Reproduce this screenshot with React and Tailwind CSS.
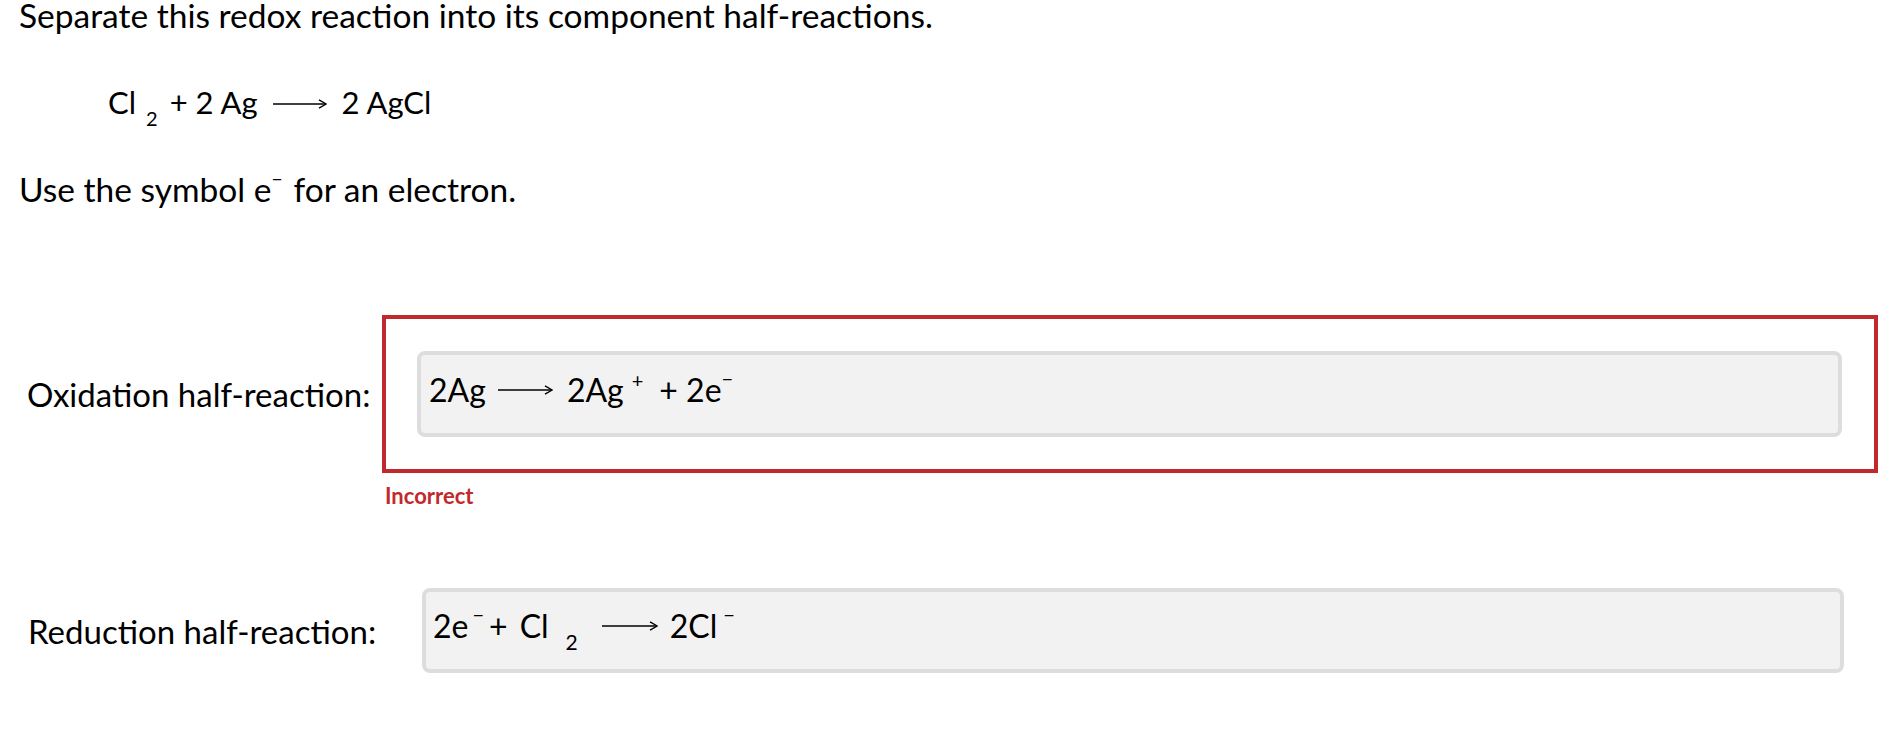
import React from 'react';

const Arrow = ({ w = 55, raise = 6 }) => (
  <svg
    width={w}
    height="12"
    viewBox={`0 0 ${w} 12`}
    className="inline-block"
    style={{ verticalAlign: `${raise}px` }}
  >
    <line x1="0" y1="6" x2={w - 1} y2="6" stroke="#000" strokeWidth="1.4" />
    <path d={`M${w - 8} 1.8 L${w - 0.8} 6 L${w - 8} 10.2`} fill="none" stroke="#000" strokeWidth="1.4" />
  </svg>
);

// superscript minus sitting at the cap line
const Minus = ({ className = '' }) => (
  <span className={`leading-[0] align-[16px] ${className}`}>−</span>
);

const Sub2 = ({ className = '' }) => (
  <span className={`leading-[0] align-[-12px] ${className}`}>2</span>
);

export default function App() {
  return (
    <div className="min-h-screen bg-white text-black font-['Lato','Liberation_Sans',sans-serif] pl-[19px] pr-[18px]">
      {/* Prompt */}
      <p className="text-[33.5px] leading-[30px] h-[30px] whitespace-nowrap">
        Separate this redox reaction into its component half-reactions.
      </p>

      <div className="mt-[57px] h-[30px] pl-[89px] text-[31px] leading-[30px] whitespace-nowrap">
        Cl
        <Sub2 className="ml-[10px] text-[20px]" />
        <span className="ml-[12px]">+ 2 Ag</span>
        <span className="ml-[15px]"><Arrow w={54} raise={4} /></span>
        <span className="ml-[15px]">2 AgCl</span>
      </div>

      <p className="mt-[56px] h-[32px] text-[33.5px] leading-[32px] whitespace-nowrap">
        Use the symbol e<Minus className="text-[19px]" />
        <span className="ml-[11px]">for an electron.</span>
      </p>

      {/* Oxidation */}
      <div className="mt-[110px] flex items-center">
        <div className="w-[363px] shrink-0 pl-[8px] text-[33px] leading-[40px] whitespace-nowrap">
          Oxidation half-reaction:
        </div>
        <div className="flex-1 border-4 border-[#c2292d] pl-[31px] pr-8 py-8">
          <div className="h-[86px] rounded-[8px] border-4 border-[#dddddd] bg-[#f2f2f2] pl-[8px] pt-[15px] text-[32px] leading-[40px] whitespace-nowrap">
            2Ag
            <span className="ml-[12px]"><Arrow w={55} raise={6} /></span>
            <span className="ml-[14px]">2Ag</span>
            <span className="ml-[8px] leading-[0] text-[20px] align-[14px]">+</span>
            <span className="ml-[16px]">+ 2e</span>
            <Minus className="text-[20px]" />
          </div>
        </div>
      </div>

      <div className="mt-[11px] ml-[366px] text-[22px] leading-[24px] font-bold text-[#c2292d]">
        Incorrect
      </div>

      {/* Reduction */}
      <div className="mt-[80px] flex items-center">
        <div className="w-[363px] shrink-0 pl-[9px] text-[33px] leading-[40px] whitespace-nowrap">
          Reduction half-reaction:
        </div>
        <div className="flex-1 pl-[40px] pr-[34px]">
          <div className="h-[85px] rounded-[8px] border-4 border-[#dddddd] bg-[#f2f2f2] pl-[7px] pt-[14px] text-[32px] leading-[40px] whitespace-nowrap">
            2e
            <Minus className="ml-[4px] text-[20px]" />
            <span className="ml-[5px]">+</span>
            <span className="ml-[12px]">Cl</span>
            <Sub2 className="ml-[17px] text-[21px]" />
            <span className="ml-[24px]"><Arrow w={56} raise={6} /></span>
            <span className="ml-[12px]">2Cl</span>
            <Minus className="ml-[6px] text-[20px]" />
          </div>
        </div>
      </div>
    </div>
  );
}
